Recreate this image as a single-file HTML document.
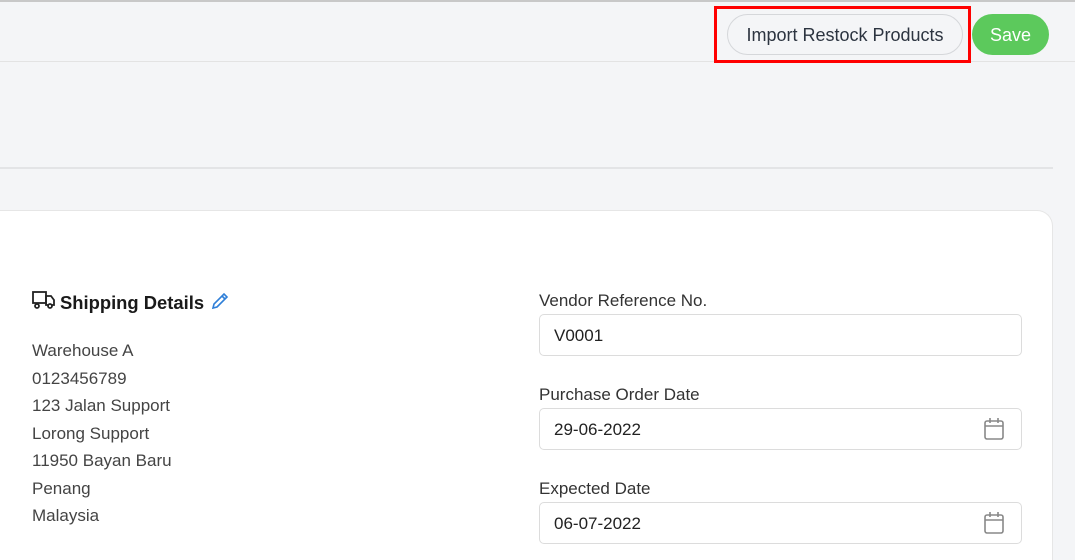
<!DOCTYPE html>
<html><head><style>
*{box-sizing:border-box;margin:0;padding:0}
html,body{width:1075px;height:560px;overflow:hidden}
body{background:#f4f5f7;font-family:"Liberation Sans",sans-serif;color:#212529;position:relative}
.abs{position:absolute}
.lbl{font-size:17px;color:#333}
.inp{position:absolute;left:539px;width:483px;height:42px;border:1px solid #dcdcdc;border-radius:5px;background:#fff;font-size:17px;padding:11px 14px;color:#222}
.addr{font-size:17px;color:#444;line-height:27.5px}
</style></head><body>
<div class="abs" style="left:0;top:0;width:1075px;height:2px;background:#c8c8c8"></div>
<div class="abs" style="left:0;top:61px;width:1075px;height:1px;background:#e3e3e3"></div>
<div class="abs" style="left:0;top:167px;width:1053px;height:2px;background:#e3e4e6"></div>
<div class="abs" style="left:714px;top:6px;width:257px;height:57px;border:3px solid #f00"></div>
<div class="abs" style="left:727px;top:14px;width:236px;height:41px;border:1px solid #d5d7da;border-radius:21px;background:#f4f5f7;font-size:18px;color:#2c3440;text-align:center;line-height:40px">Import Restock Products</div>
<div class="abs" style="left:972px;top:14px;width:77px;height:41px;border-radius:21px;background:#5cc95c;color:#fff;font-size:18px;text-align:center;line-height:42px">Save</div>
<div class="abs" style="left:0;top:210px;width:1053px;height:350px;background:#fff;border:1px solid #e6e6e6;border-left:none;border-bottom:none;border-radius:0 16px 0 0"></div>
<svg class="abs" style="left:32px;top:290px" width="24" height="20" viewBox="0 0 24 20" fill="none" stroke="#222" stroke-width="1.8"><rect x="1" y="2" width="13" height="11"/><path d="M14 6h5l3 4v5h-8z"/><circle cx="5" cy="16" r="2" fill="#fff"/><circle cx="18" cy="16" r="2" fill="#fff"/></svg>
<div class="abs" style="left:60px;top:292px;font-size:18.4px;font-weight:bold;color:#1a1a1a">Shipping Details</div>
<svg class="abs" style="left:211px;top:292px" width="18" height="18" viewBox="0 0 18 18" fill="none" stroke="#2f7fd8" stroke-width="1.6"><path d="M2 16l1-4L13 2l3 3L6 15z M11 4l3 3"/></svg>
<div class="abs addr" style="left:32px;top:337px">Warehouse A<br>0123456789<br>123 Jalan Support<br>Lorong Support<br>11950 Bayan Baru<br>Penang<br>Malaysia</div>
<div class="abs lbl" style="left:539px;top:291px">Vendor Reference No.</div>
<div class="inp" style="top:314px">V0001</div>
<div class="abs lbl" style="left:539px;top:385px">Purchase Order Date</div>
<div class="inp" style="top:408px">29-06-2022</div>
<div class="abs lbl" style="left:539px;top:479px">Expected Date</div>
<div class="inp" style="top:502px">06-07-2022</div>
<svg class="abs" style="left:983px;top:417px" width="22" height="24" viewBox="0 0 22 24" fill="none" stroke="#888" stroke-width="1.6"><rect x="2" y="4" width="18" height="18" rx="2"/><path d="M2 9h18M7 1v5M15 1v5"/></svg>
<svg class="abs" style="left:983px;top:511px" width="22" height="24" viewBox="0 0 22 24" fill="none" stroke="#888" stroke-width="1.6"><rect x="2" y="4" width="18" height="18" rx="2"/><path d="M2 9h18M7 1v5M15 1v5"/></svg>
</body></html>
